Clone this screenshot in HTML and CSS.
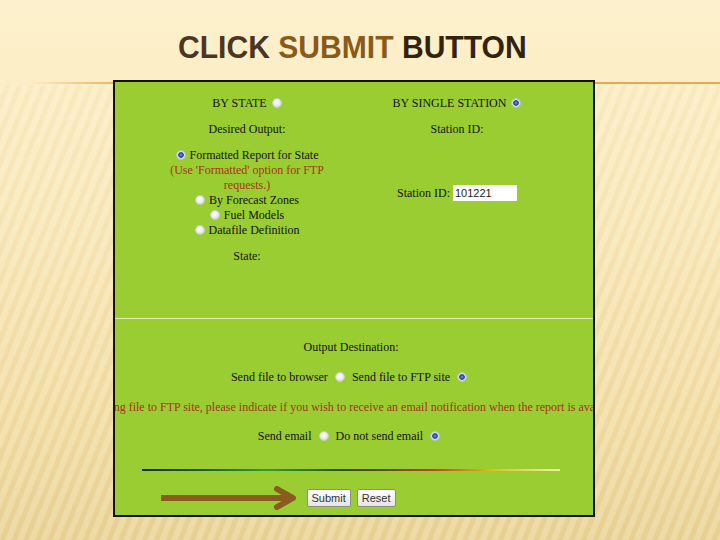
FILE: index.html
```html
<!DOCTYPE html>
<html lang="en">
  <head>
    <meta charset="UTF-8" />
    <title>Click Submit Button</title>
    <link rel="stylesheet" href="styles.css">
  </head>
  <body>
    <h1 class="slide-title">
      <span class="title-text"><span class="t-dark">CLICK</span> <span class="t-accent">SUBMIT</span> <span class="t-deep">BUTTON</span></span>
    </h1>

    <form class="panel" id="stationForm">
      <div class="choice-grid">
        <div class="cell">BY STATE <input type="radio" class="radio" name="mode" value="state" /></div>
        <div class="cell">BY SINGLE STATION <input type="radio" class="radio" name="mode" value="station" checked /></div>

        <div class="cell">Desired Output:</div>
        <div class="cell">Station ID:</div>

        <div class="cell">
          <div><input type="radio" class="radio lead" name="output" checked /> Formatted Report for State</div>
          <div class="note narrow">(Use 'Formatted' option for FTP requests.)</div>
          <div><input type="radio" class="radio lead" name="output" /> By Forecast Zones</div>
          <div><input type="radio" class="radio lead" name="output" /> Fuel Models</div>
          <div><input type="radio" class="radio lead" name="output" /> Datafile Definition</div>
        </div>
        <div class="cell middle">
          <label for="stationId">Station ID:</label>
          <input type="text" id="stationId" class="station-input" value="101221" />
        </div>

        <div class="cell">State:</div>
        <div class="cell"></div>
      </div>

      <div class="destination">
        <div class="row">Output Destination:</div>
        <div class="row gap">
          Send file to browser <input type="radio" class="radio pad" name="dest" />
          Send file to FTP site <input type="radio" class="radio pad" name="dest" checked />
        </div>
        <div class="row gap overflow-row">
          <span class="note nowrap">If sending file to FTP site, please indicate if you wish to receive an email notification when the report is available.</span>
        </div>
        <div class="row gap-s">
          Send email <input type="radio" class="radio pad" name="mail" />
          Do not send email <input type="radio" class="radio pad" name="mail" checked />
        </div>
        <div class="rainbow"></div>
        <div class="actions">
          <div class="btn-group">
            <!-- flèche d'annotation -->
            <svg class="arrow" width="140" height="24" viewBox="0 0 140 24">
              <line x1="2" y1="12" x2="132" y2="12" stroke="#8b5a1e" stroke-width="6" />
              <polyline points="118,3 134,12 118,21" fill="none" stroke="#8b5a1e" stroke-width="6" stroke-linecap="round" stroke-linejoin="round" />
            </svg>
            <button type="submit">Submit</button>
            <button type="reset">Reset</button>
          </div>
        </div>
      </div>
    </form>
  </body>
</html>
```

FILE: styles.css
```css
html {
  height: 100%;
}
body {
  margin: 0;
  min-height: 540px;
  font-family: "Liberation Serif", "Times New Roman", serif;
  font-size: 12px;
  color: #111;
  background-color: #f6e4b2;
  background-image:
    linear-gradient(to right, rgba(234, 168, 80, 0) 30px, #eaa850 130px, #eaa850),
    repeating-linear-gradient(112deg, rgba(255, 248, 222, 0.22) 0 4px, rgba(205, 170, 100, 0.07) 6px 9px, rgba(255, 248, 222, 0.22) 11px),
    linear-gradient(#fdf1cd 0, #f9e9bc 200px, #f1dca4 420px, #e9d296 540px);
  background-size: 100% 2px, 100% 460px, 100% 100%;
  background-position: 0 82px, 0 85px, 0 0;
  background-repeat: no-repeat;
}
.slide-title {
  margin: 0;
  height: 80px;
  box-sizing: border-box;
  padding: 29px 0 0 178px;
  font-family: "Liberation Sans", Arial, sans-serif;
  font-weight: bold;
  font-size: 32px;
  line-height: 36px;
}
.title-text {
  display: inline-block;
  transform: scaleX(0.94);
  transform-origin: left center;
  white-space: nowrap;
}
.t-dark {
  color: #4a3621;
}
.t-accent {
  color: #8a5a18;
}
.t-deep {
  color: #33230e;
}
.panel {
  width: 482px;
  margin-left: 113px;
  box-sizing: border-box;
  border: 2px solid #111;
  background: #9acd32;
  overflow: hidden;
  line-height: 15px;
}
.choice-grid {
  display: grid;
  grid-template-columns: 210px 210px;
  grid-template-rows: 15px 15px 90px 15px;
  row-gap: 11px;
  padding: 14px 0 54px 27px;
  border-bottom: 1px solid #e4efb6;
}
.cell {
  text-align: center;
}
.cell.middle {
  display: flex;
  align-items: center;
  justify-content: center;
  gap: 3px;
}
.note {
  color: #a8321a;
}
.narrow {
  width: 160px;
  margin: 0 auto;
}
.nowrap {
  white-space: nowrap;
}
.radio {
  appearance: none;
  -webkit-appearance: none;
  width: 10px;
  height: 10px;
  margin: 0 0 0 2px;
  vertical-align: -1px;
  border-radius: 50%;
  border: 1px solid #c9cdd0;
  box-sizing: border-box;
  background: radial-gradient(circle at 45% 40%, #ffffff 0, #eeeeee 45%, #c4c4c4 100%);
}
.radio:checked {
  border-color: #b8c4d4;
  background: radial-gradient(circle, #6e9ae0 0, #1d3c8a 2.4px, #dfe6f2 3.2px, #b6c0d0 5px);
}
.radio.lead {
  margin: 0 1px 0 0;
}
.radio.pad {
  margin: 0 4px;
}
.station-input {
  width: 64px;
  height: 16px;
  box-sizing: border-box;
  border: none;
  padding: 0 2px;
  font-family: "Liberation Sans", Arial, sans-serif;
  font-size: 11px;
  color: #222;
  background: #fff;
}
.destination {
  padding: 21px 6px 8px 0;
}
.row {
  height: 15px;
  text-align: center;
  white-space: nowrap;
}
.gap {
  margin-top: 15px;
}
.gap-s {
  margin-top: 14px;
}
.overflow-row {
  display: flex;
  justify-content: center;
}
.rainbow {
  width: 418px;
  height: 2px;
  margin: 25px auto 0;
  background: linear-gradient(to right, #1a2636 0, #1e5a3a 15%, #2aa02a 30%, #2e4a1e 48%, #5a4a1e 58%, #c2421a 70%, #e0c020 84%, #f2f2b0 100%);
}
.actions {
  display: flex;
  justify-content: center;
  margin-top: 18px;
}
.btn-group {
  position: relative;
  display: flex;
  gap: 6px;
}
.arrow {
  position: absolute;
  right: 100%;
  top: -3px;
  margin-right: 8px;
}
button {
  height: 18px;
  padding: 0 4px;
  font-family: "Liberation Sans", Arial, sans-serif;
  font-size: 11px;
  color: #333;
  background: linear-gradient(#ffffff, #e4e4e4);
  border: 1px solid #8c8c8c;
  border-radius: 2px;
  cursor: pointer;
}
```
